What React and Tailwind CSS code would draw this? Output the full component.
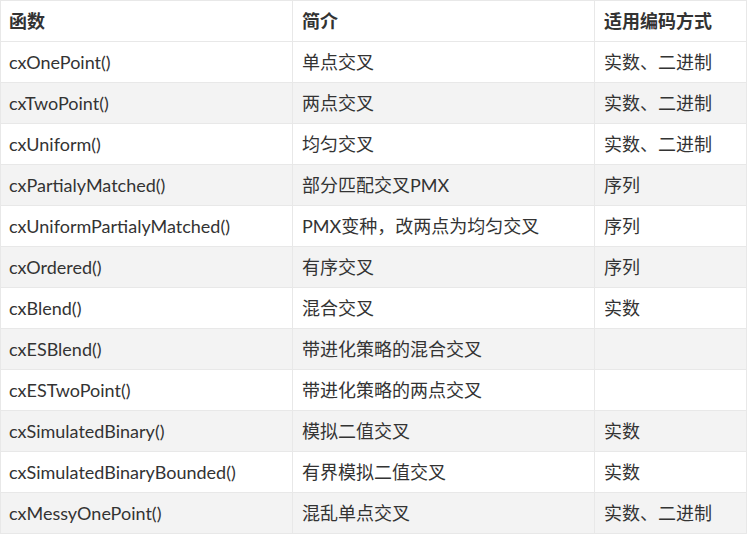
import React from 'react';

const rows = [
  ['cxOnePoint()', '单点交叉', '实数、二进制'],
  ['cxTwoPoint()', '两点交叉', '实数、二进制'],
  ['cxUniform()', '均匀交叉', '实数、二进制'],
  ['cxPartialyMatched()', '部分匹配交叉PMX', '序列'],
  ['cxUniformPartialyMatched()', 'PMX变种，改两点为均匀交叉', '序列'],
  ['cxOrdered()', '有序交叉', '序列'],
  ['cxBlend()', '混合交叉', '实数'],
  ['cxESBlend()', '带进化策略的混合交叉', ''],
  ['cxESTwoPoint()', '带进化策略的两点交叉', ''],
  ['cxSimulatedBinary()', '模拟二值交叉', '实数'],
  ['cxSimulatedBinaryBounded()', '有界模拟二值交叉', '实数'],
  ['cxMessyOnePoint()', '混乱单点交叉', '实数、二进制'],
];

const App = () => {
  return (
    <div className="w-[748px] h-[538px] bg-white overflow-hidden">
      <table
        className="w-[747px] border-collapse table-fixed text-[18px] leading-6 text-[#333]"
        style={{ fontFamily: 'Lato, "Noto Sans CJK SC", sans-serif' }}
      >
        <colgroup>
          <col className="w-[292px]" />
          <col className="w-[302px]" />
          <col />
        </colgroup>
        <thead>
          <tr className="h-[41px]">
            <th className="border border-[#e8e8e8] pl-2 text-left font-bold">函数</th>
            <th className="border border-[#e8e8e8] pl-[9px] text-left font-bold">简介</th>
            <th className="border border-[#e8e8e8] pl-[9px] text-left font-bold">适用编码方式</th>
          </tr>
        </thead>
        <tbody>
          {rows.map((r, i) => (
            <tr key={i} className={`h-[41px] ${i % 2 === 1 ? 'bg-[#f3f3f3]' : 'bg-white'}`}>
              <td className="border border-[#e8e8e8] pl-2">{r[0]}</td>
              <td className="border border-[#e8e8e8] pl-[9px]">{r[1]}</td>
              <td className="border border-[#e8e8e8] pl-[9px]">{r[2]}</td>
            </tr>
          ))}
        </tbody>
      </table>
    </div>
  );
};

export default App;
